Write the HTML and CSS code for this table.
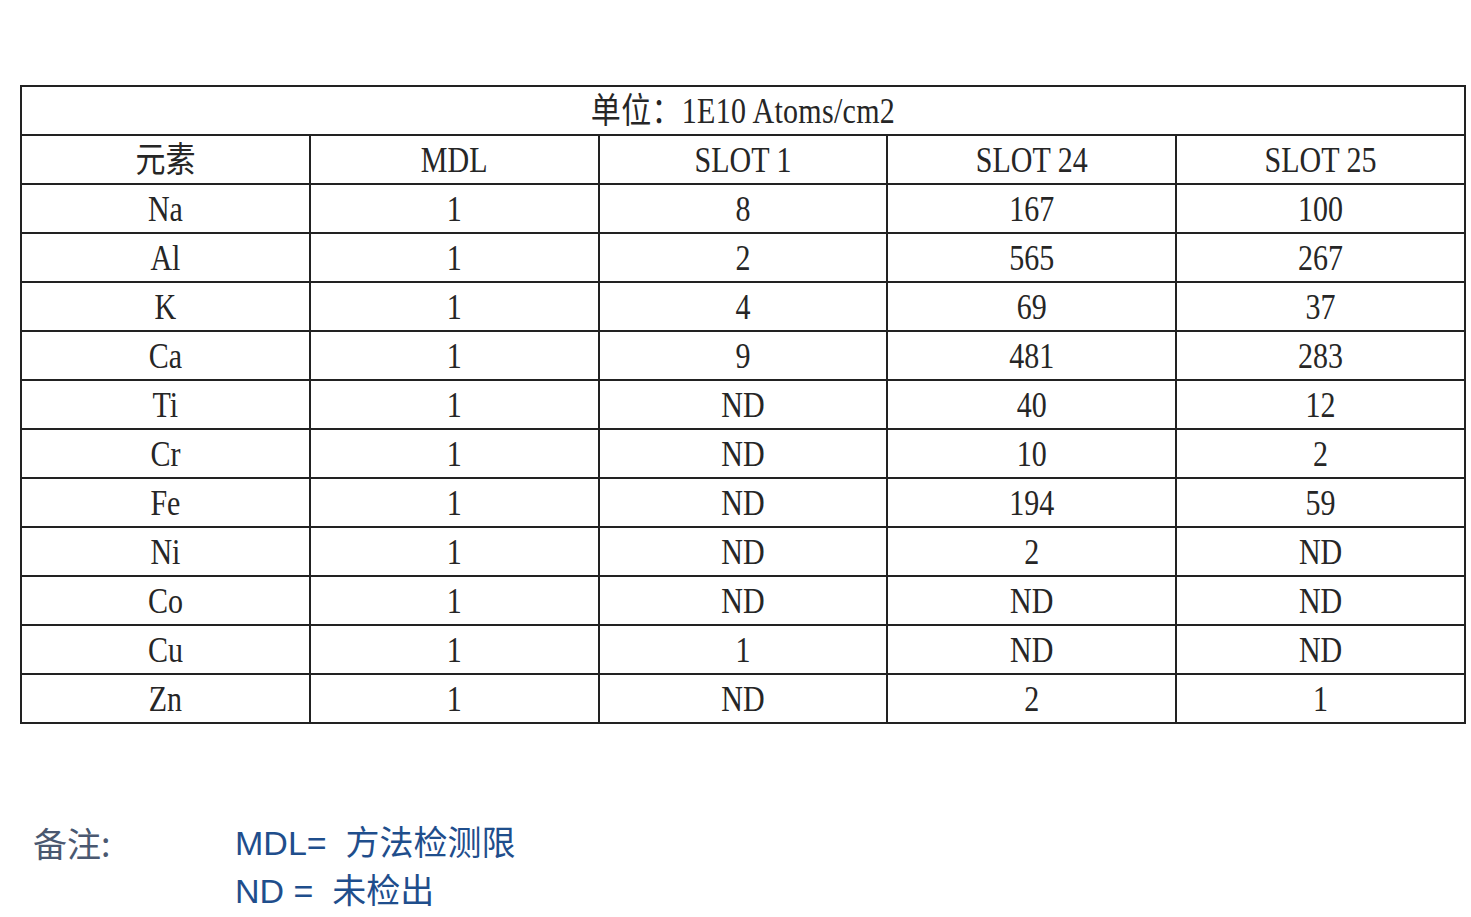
FILE: index.html
```html
<!DOCTYPE html>
<html lang="zh">
<head>
<meta charset="utf-8">
<title>检测结果</title>
<link rel="stylesheet" href="styles.css">
</head>
<body>
<div class="page">
  <table class="data">
    <tr><td class="title" colspan="5"><span class="t">单位：1E10 Atoms/cm2</span></td></tr>
    <tr><td><span class="t">元素</span></td><td><span class="t">MDL</span></td><td><span class="t">SLOT 1</span></td><td><span class="t">SLOT 24</span></td><td><span class="t">SLOT 25</span></td></tr>
    <tr><td><span class="t">Na</span></td><td><span class="t">1</span></td><td><span class="t">8</span></td><td><span class="t">167</span></td><td><span class="t">100</span></td></tr>
    <tr><td><span class="t">Al</span></td><td><span class="t">1</span></td><td><span class="t">2</span></td><td><span class="t">565</span></td><td><span class="t">267</span></td></tr>
    <tr><td><span class="t">K</span></td><td><span class="t">1</span></td><td><span class="t">4</span></td><td><span class="t">69</span></td><td><span class="t">37</span></td></tr>
    <tr><td><span class="t">Ca</span></td><td><span class="t">1</span></td><td><span class="t">9</span></td><td><span class="t">481</span></td><td><span class="t">283</span></td></tr>
    <tr><td><span class="t">Ti</span></td><td><span class="t">1</span></td><td><span class="t">ND</span></td><td><span class="t">40</span></td><td><span class="t">12</span></td></tr>
    <tr><td><span class="t">Cr</span></td><td><span class="t">1</span></td><td><span class="t">ND</span></td><td><span class="t">10</span></td><td><span class="t">2</span></td></tr>
    <tr><td><span class="t">Fe</span></td><td><span class="t">1</span></td><td><span class="t">ND</span></td><td><span class="t">194</span></td><td><span class="t">59</span></td></tr>
    <tr><td><span class="t">Ni</span></td><td><span class="t">1</span></td><td><span class="t">ND</span></td><td><span class="t">2</span></td><td><span class="t">ND</span></td></tr>
    <tr><td><span class="t">Co</span></td><td><span class="t">1</span></td><td><span class="t">ND</span></td><td><span class="t">ND</span></td><td><span class="t">ND</span></td></tr>
    <tr><td><span class="t">Cu</span></td><td><span class="t">1</span></td><td><span class="t">1</span></td><td><span class="t">ND</span></td><td><span class="t">ND</span></td></tr>
    <tr><td><span class="t">Zn</span></td><td><span class="t">1</span></td><td><span class="t">ND</span></td><td><span class="t">2</span></td><td><span class="t">1</span></td></tr>
  </table>
  <div class="notes">
    <div class="label">备注:</div>
    <div class="defs">
      <div class="def">MDL=&nbsp; 方法检测限</div>
      <div class="def">ND =&nbsp; 未检出</div>
    </div>
  </div>
</div>
</body>
</html>
```
FILE: styles.css
```css
html, body {
  margin: 0;
  padding: 0;
  background: #ffffff;
}

.page {
  padding: 85px 0 0 20px;
}

.data {
  border-collapse: collapse;
  width: 1446px;
  table-layout: fixed;
  font-family: "Liberation Serif", "Noto Sans CJK SC", serif;
  font-size: 30px;
  color: #262626;
}

.data td {
  border: 2px solid #222222;
  height: 47px;
  padding: 0;
  text-align: center;
  vertical-align: middle;
  line-height: 30px;
}

.title .t {
  letter-spacing: 0.3px;
}

.t {
  display: inline-block;
  transform: scaleY(1.18);
}

.notes {
  display: flex;
  margin-top: 95px;
  padding-left: 13px;
  font-size: 34px;
  line-height: 48px;
}

.label {
  width: 202px;
  font-family: "Noto Sans CJK SC", sans-serif;
  color: #4a5870;
}

.defs {
  font-family: "Liberation Sans", "Noto Sans CJK SC", sans-serif;
  color: #1f4e8c;
}
```
